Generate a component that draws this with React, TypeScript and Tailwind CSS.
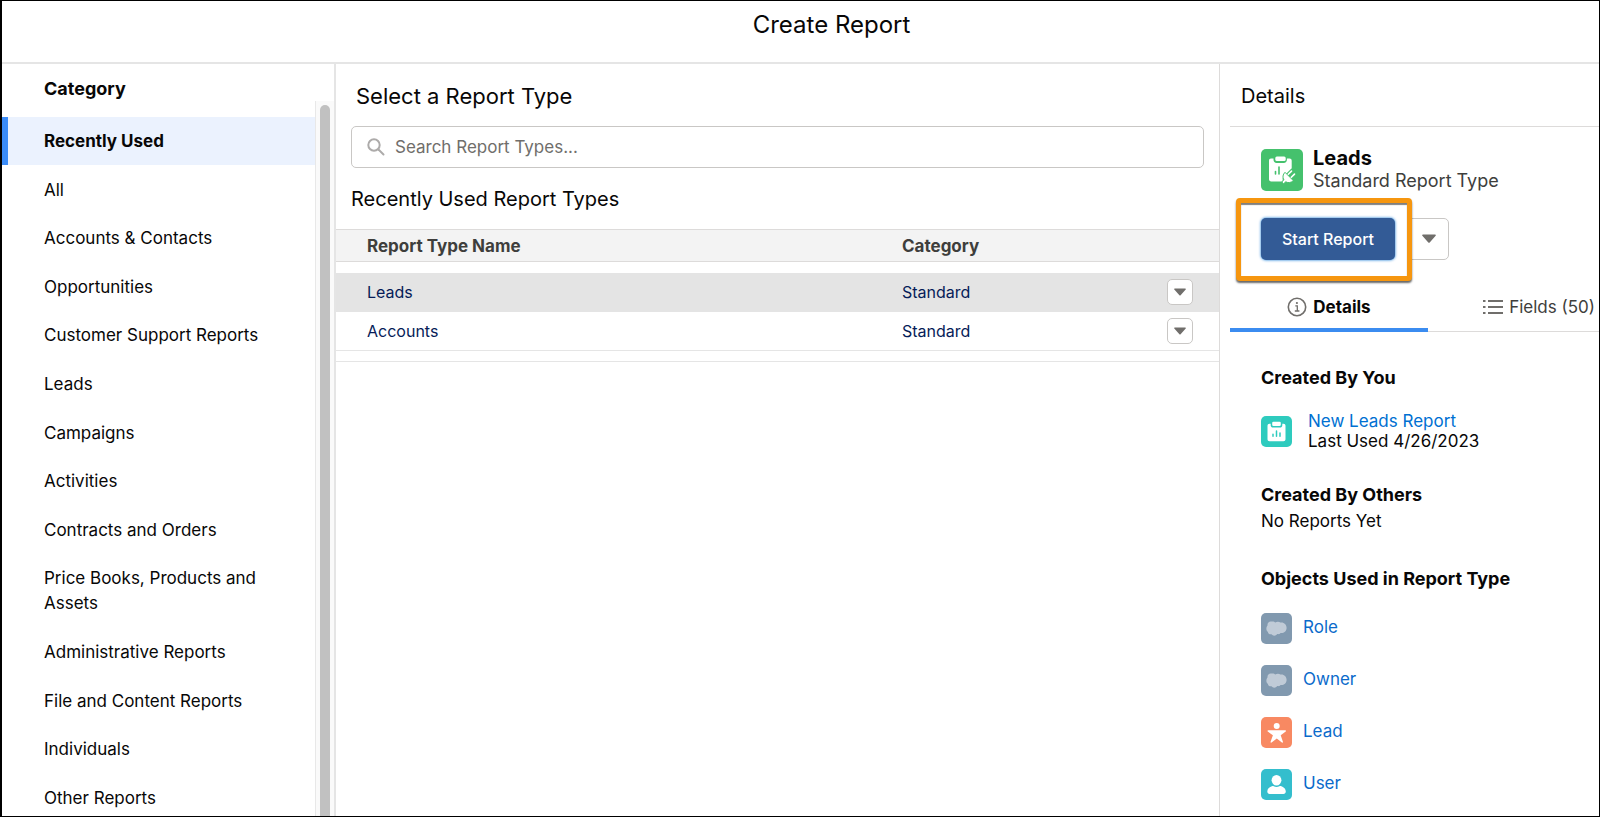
import { useState } from 'react'
import type { ReactNode } from 'react'
import clsx from 'clsx'

const CATEGORIES = [
  'Recently Used',
  'All',
  'Accounts & Contacts',
  'Opportunities',
  'Customer Support Reports',
  'Leads',
  'Campaigns',
  'Activities',
  'Contracts and Orders',
  'Price Books, Products and Assets',
  'Administrative Reports',
  'File and Content Reports',
  'Individuals',
  'Other Reports',
]

const REPORT_TYPES = [
  { name: 'Leads', category: 'Standard' },
  { name: 'Accounts', category: 'Standard' },
]

const OBJECTS = [
  { name: 'Role', color: 'bg-[#8199af]', icon: <CloudGlyph /> },
  { name: 'Owner', color: 'bg-[#8199af]', icon: <CloudGlyph /> },
  { name: 'Lead', color: 'bg-[#f88962]', icon: <LeadGlyph /> },
  { name: 'User', color: 'bg-[#34becd]', icon: <UserGlyph /> },
]

function CloudGlyph() {
  return (
    <svg viewBox="0 0 31 31" className="size-full" aria-hidden="true">
      <path
        fill="#c0cbd7"
        d="M6.500 12.500c-.3-2.600 1.800-4.400 3.900-3.900 1.600-.5 3.200.2 4 .9 1.300-1.100 3.800-1.200 5 .1 2.900-.9 6.300 1.800 6.200 5.400 0 3.500-3.200 5.500-6 5-1 1.200-2.500 1.300-3.500 1-1 2.100-4.300 2.300-5.600.3-2 .3-3.500-.9-3.700-2.600C4.900 17.600 5 14 6.500 12.500z"
      />
    </svg>
  )
}

function LeadGlyph() {
  return (
    <svg viewBox="0 0 31 31" className="size-full" fill="#fff" aria-hidden="true">
      <circle cx="15.7" cy="9" r="3" />
      <path d="M7.300 13.200h16.900c.9 0 1.100.9.500 1.300l-5 3.800 2.300 6.600c.2.700-.6 1.100-1.100.7l-5.100-4.100-5.200 4.100c-.5.4-1.300 0-1.100-.7l2.400-6.600-5.100-3.800c-.6-.4-.4-1.300.5-1.300z" />
    </svg>
  )
}

function UserGlyph() {
  return (
    <svg viewBox="0 0 31 31" className="size-full" fill="#fff" aria-hidden="true">
      <ellipse cx="15.500" cy="11.300" rx="4.900" ry="5.300" />
      <path d="M6.300 22.600c0-3.200 2.700-4.600 5.300-5.500.4-.1.800 0 1.100.2 1.800 1 3.900 1 5.700 0 .3-.2.700-.3 1.100-.2 2.600.9 5.300 2.300 5.300 5.500 0 1.400-1 2.300-2.300 2.300H8.600c-1.300 0-2.300-.9-2.300-2.300z" />
    </svg>
  )
}

function ReportGlyph() {
  return (
    <svg viewBox="0 0 31 31" className="size-full" aria-hidden="true">
      <path
        fill="#fff"
        d="M8.500 7.800h1.200v1.400c0 1.500 1 2.300 2.300 2.300h7c1.300 0 2.300-.8 2.300-2.300V7.800h1.200c1.200 0 2 .8 2 2v13.500c0 1.200-.8 2-2 2h-14c-1.200 0-2-.8-2-2V9.800c0-1.200.8-2 2-2z"
      />
      <rect x="11.200" y="5.800" width="8.600" height="4.200" rx="1.300" fill="#fff" />
      <path stroke="#2ecbbe" strokeWidth="1.500" strokeLinecap="round" d="M12 18.300v2M15.500 15v5.300M19 17v3.300" />
    </svg>
  )
}

function ReportTypeGlyph() {
  return (
    <svg viewBox="0 0 42 42" className="size-full" aria-hidden="true">
      <path
        fill="#fff"
        d="M10 9.500h2.500v1c0 2.200 1.200 3.500 3.200 3.500h7c2 0 3.200-1.300 3.200-3.500v-1h2.600c1.300 0 2.200.9 2.200 2.200v9l-9 8.500v3.300H10.200c-1.300 0-2.200-.9-2.200-2.200V11.700c0-1.300.8-2.200 2-2.200z"
      />
      <rect x="14.300" y="7.500" width="10.400" height="4.600" rx="1.600" fill="#fff" />
      <path stroke="#45c16d" strokeWidth="1.600" strokeLinecap="round" d="M14.500 22.500v2.500M18 18v7" />
      {/* plug */}
      <path stroke="#45c16d" strokeWidth="4.500" strokeLinecap="round" d="M27 26l4-4M29.500 28.500l4-4" />
      <path fill="#fff" stroke="#45c16d" strokeWidth="1" d="M24 23.300l8.300 8.300c-2.200 2.300-5.300 2.500-7.500 1.200l-2.200 2-1.800-1.800 2-2.200c-1.400-2.300-1.100-5.300 1.200-7.500z" />
      <path stroke="#fff" strokeWidth="1.600" strokeLinecap="round" d="M27.300 25.300l3.200-3.200M30.300 28.300l3.200-3.200" />
    </svg>
  )
}

function Caret({ className }: { className?: string }) {
  return (
    <svg viewBox="0 0 12 8" className={className} fill="#706e6b" aria-hidden="true">
      <path d="M.8.500h10.400c.6 0 .9.600.5 1L6.600 7.300c-.3.4-.8.400-1.200 0L.3 1.500C-.1 1.100.2.500.8.500z" />
    </svg>
  )
}

function IconTile({ color, children }: { color: string; children: ReactNode }) {
  return <span className={clsx('size-[31px] shrink-0 overflow-hidden rounded-[5px]', color)}>{children}</span>
}

function CategoryNav() {
  const [active, setActive] = useState('Recently Used')

  return (
    <nav aria-label="Category" className="flex w-[334px] shrink-0 flex-col border-r-2 border-[#e5e5e5]">
      <h2 className="pt-3 pb-4 pl-[42px] text-[18px] leading-[25px] font-bold">Category</h2>
      <div className="flex flex-1">
        <ul className="flex flex-1 flex-col justify-between">
          {CATEGORIES.map((category) => (
            <li key={category} className="group">
              <button
                onClick={() => setActive(category)}
                className={clsx(
                  'w-full border-l-6 pt-3 pr-10 pb-[11px] pl-9 text-left text-[17px] leading-[25px] group-last:pb-[5px]',
                  category === active ? 'border-[#3b8cf8] bg-[#ebf2fe] font-bold' : 'border-transparent',
                )}
              >
                {category}
              </button>
            </li>
          ))}
        </ul>
        {/* scroll track */}
        <div className="-mt-4 flex w-[19px] border-l border-[#e8e8e8] bg-[#fafafa] pt-1 pl-1">
          <div className="w-[10px] rounded-t-full bg-[#c1c1c1]" />
        </div>
      </div>
    </nav>
  )
}

function ReportTypeList() {
  return (
    <main className="min-w-0 flex-1">
      <h2 className="pt-4 pl-5 text-[22px] leading-8">Select a Report Type</h2>
      <label className="mx-[15px] mt-[14px] flex h-[42px] items-center gap-[10px] rounded-[5px] border border-[#c9c7c5] pl-[15px]">
        <svg viewBox="0 0 18 18" className="size-[18px]" fill="none" stroke="#adabaa" strokeWidth="2" strokeLinecap="round" aria-hidden="true">
          <circle cx="7" cy="7" r="5.700" />
          <path d="M11.500 11.500l5 5" />
        </svg>
        <input
          type="search"
          aria-label="Search Report Types"
          placeholder="Search Report Types..."
          className="min-w-0 flex-1 text-[17px] leading-6 outline-none placeholder:text-[#706e6b]"
        />
      </label>
      <h3 className="pt-[15px] pb-[14px] pl-[15px] text-[20px] leading-8">Recently Used Report Types</h3>
      <table className="w-full table-fixed border-collapse text-left">
        <thead>
          <tr className="h-8 border-y border-[#dddbda] bg-[#f3f3f3] text-[17px] leading-6 text-[#3e3e3c]">
            <th className="pl-[31px] font-bold">Report Type Name</th>
            <th className="w-[265px] font-bold">Category</th>
            <th className="w-[52px]" aria-label="Actions" />
          </tr>
        </thead>
        <tbody>
          <tr className="h-[11px]">
            <td colSpan={3} />
          </tr>
          {REPORT_TYPES.map(({ name, category }, i) => (
            <tr key={name} className={clsx('h-[39px] text-[16px] leading-6 text-[#061c58]', i === 0 && 'bg-[#e4e4e4]')}>
              <td className="pl-[31px]">{name}</td>
              <td>{category}</td>
              <td>
                <button
                  aria-label={`Actions for ${name}`}
                  className="flex size-[26px] items-center justify-center rounded-[5px] border border-[#c9c7c5] bg-white"
                >
                  <Caret className="w-3" />
                </button>
              </td>
            </tr>
          ))}
          <tr className="h-[11px] border-y border-[#e5e5e5]">
            <td colSpan={3} />
          </tr>
        </tbody>
      </table>
    </main>
  )
}

function DetailsPanel() {
  return (
    <aside className="w-[380px] shrink-0 border-l border-[#dddbda] pl-[10px]">
      <h2 className="border-b border-[#dddbda] pt-4 pb-[14px] pl-[11px] text-[20px] leading-8">Details</h2>

      <div className="flex gap-[10px] pt-[22px] pl-[31px]">
        <span className="size-[42px] shrink-0 rounded-[5px] bg-[#45c16d]">
          <ReportTypeGlyph />
        </span>
        <div>
          <h3 className="text-[20px] leading-[18px] font-bold">Leads</h3>
          <p className="text-[18px] leading-7 text-[#3e3e3c]">Standard Report Type</p>
        </div>
      </div>

      <div className="flex pt-[3px] pl-[6px]">
        <div className="relative z-10 rounded border-5 border-[#f6960f] bg-white pt-[15px] pr-3 pb-4 pl-5 shadow-[0_2px_2px_rgba(0,0,0,0.6),inset_0_2px_1px_rgba(0,0,0,0.5)]">
          <button className="h-[42px] w-[134px] rounded-[5px] bg-[#335b96] text-[16px] leading-6 font-medium text-white shadow-[0_0_3px_#0070d2]">
            Start Report
          </button>
        </div>
        <button
          aria-label="More actions"
          className="mt-5 -ml-1 flex h-[42px] w-[41px] items-center justify-center rounded-r-[5px] border border-[#c9c7c5] bg-white"
        >
          <Caret className="w-[14px]" />
        </button>
      </div>

      <div role="tablist" className="mt-[6px] flex h-[45px] justify-between border-b border-[#dddbda] text-[17px] leading-6">
        <button
          role="tab"
          aria-selected="true"
          className="-mb-px flex w-[198px] items-center justify-center gap-[6px] border-b-4 border-[#3b8cf0] pb-px font-bold"
        >
          <svg viewBox="0 0 20 20" className="size-5" fill="none" stroke="#706e6b" strokeWidth="1.600" aria-hidden="true">
            <circle cx="10" cy="10" r="8.700" />
            <path d="M8.300 8.800h2v5M7.800 14h4.600" strokeWidth="1.300" />
            <circle cx="9.900" cy="6" r="1.100" fill="#706e6b" stroke="none" />
          </svg>
          Details
        </button>
        <button role="tab" aria-selected="false" className="flex items-center gap-[6px] pr-1 pb-1 text-[#3e3e3c]">
          <svg viewBox="0 0 20 16" className="h-4 w-5" stroke="#706e6b" strokeWidth="2" aria-hidden="true">
            <path d="M0 2h2.500M5 2h15M0 8h2.500M5 8h15M0 14h2.500M5 14h15" />
          </svg>
          Fields (50)
        </button>
      </div>

      <div className="pt-[33px] pl-[31px]">
        <h3 className="text-[18px] leading-[26px] font-bold">Created By You</h3>
        <div className="flex items-center gap-4 pt-5">
          <IconTile color="bg-[#2ecbbe]">
            <ReportGlyph />
          </IconTile>
          <div className="text-[17px] leading-5">
            <a href="#report" className="text-[#0070d2]">New Leads Report</a>
            <p>Last Used 4/26/2023</p>
          </div>
        </div>

        <h3 className="pt-[31px] text-[18px] leading-[26px] font-bold">Created By Others</h3>
        <p className="text-[17px] leading-[26px]">No Reports Yet</p>

        <h3 className="pt-8 text-[18px] leading-[26px] font-bold">Objects Used in Report Type</h3>
        <ul className="flex flex-col gap-[21px] pt-[21px]">
          {OBJECTS.map(({ name, color, icon }) => (
            <li key={name} className="flex gap-[11px]">
              <IconTile color={color}>{icon}</IconTile>
              <a href={`#${name.toLowerCase()}`} className="text-[17px] leading-[29px] text-[#0b6bcb]">
                {name}
              </a>
            </li>
          ))}
        </ul>
      </div>
    </aside>
  )
}

export default function App() {
  return (
    <div className="flex min-h-screen flex-col border border-l-2 border-black bg-white font-['Inter',sans-serif] text-[#080707]">
      <header className="border-b-2 border-[#e5e5e5] pt-2 pb-[21px] pl-[62px] text-center">
        <h1 className="text-[24px] leading-8">Create Report</h1>
      </header>
      <div className="flex flex-1">
        <CategoryNav />
        <ReportTypeList />
        <DetailsPanel />
      </div>
    </div>
  )
}
